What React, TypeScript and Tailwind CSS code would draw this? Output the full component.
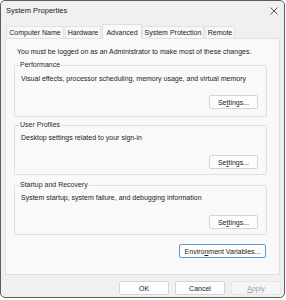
import React from "react";

const font = { fontFamily: '"Liberation Sans", Arial, sans-serif' };

function Btn({
  children,
  w,
  disabled,
  primary,
}: {
  children: React.ReactNode;
  w: string;
  disabled?: boolean;
  primary?: boolean;
}) {
  return (
    <div
      className={`${w} h-[14px] flex items-center justify-center rounded-[2px] border text-[7px] leading-none ${
        disabled
          ? "bg-[#f5f5f5] border-[#e6e6e6] text-[#a2a2a2]"
          : primary
          ? "bg-[#fdfdfd] border-[#5b9bd9] text-[#1b1b1b]"
          : "bg-[#fdfdfd] border-[#d4d4d4] text-[#1b1b1b]"
      }`}
    >
      {children}
    </div>
  );
}

function Group({
  label,
  text,
  h,
  pt,
  gap,
}: {
  label: string;
  text: string;
  h: string;
  pt: string;
  gap: string;
}) {
  return (
    <div className={`relative ${h} ${pt} border border-[#dedede] rounded-[2px] flex flex-col`}>
      <span className="absolute -top-[6px] left-[4px] px-[1px] bg-[#f9f9f9] text-[7px] leading-[10px] text-[#2a2a2a]">
        {label}
      </span>
      <div className="pl-[6px] h-[10px] text-[7px] leading-[10px] text-[#1b1b1b]">{text}</div>
      <div className={`flex justify-end pr-[8px] ${gap}`}>
        <Btn w="w-[49px]">
          Se<span className="underline">t</span>tings...
        </Btn>
      </div>
    </div>
  );
}

function Tab({ label, active, w }: { label: string; active?: boolean; w: string }) {
  return (
    <div
      className={`${w} flex items-center justify-center border border-b-0 text-[7px] leading-none text-[#1b1b1b] ${
        active
          ? "h-[15px] bg-[#f9f9f9] border-[#dedede] -mb-[1px] relative z-10"
          : "h-[12px] bg-[#f7f7f7] border-[#e2e2e2]"
      }`}
    >
      {label}
    </div>
  );
}

export default function App() {
  return (
    <div className="w-[286px] h-[300px] bg-white" style={font}>
      <div className="w-[285px] h-[298px] border border-[#5c5c5c] rounded-[5px] bg-[#f0f0f0] flex flex-col overflow-hidden">
        <div className="h-[20px] flex items-center justify-between pl-[5px] pr-[6px]">
          <span className="text-[7.5px] text-[#1b1b1b]">System Properties</span>
          <svg width="8" height="8" viewBox="0 0 8 8" className="text-[#333]">
            <path d="M0.5 0.5 L7.5 7.5 M7.5 0.5 L0.5 7.5" stroke="currentColor" strokeWidth="0.8" />
          </svg>
        </div>
        <div className="mt-[3px] pl-[5px] flex items-end h-[14px]">
          <Tab label="Computer Name" w="w-[58px]" />
          <Tab label="Hardware" w="w-[36px] ml-[1px]" />
          <Tab label="Advanced" w="w-[40px] ml-[1px]" active />
          <Tab label="System Protection" w="w-[62px]" />
          <Tab label="Remote" w="w-[30px] ml-[1px]" />
        </div>
        <div className="mx-[4px] h-[237px] border border-[#e0e0e0] bg-[#f9f9f9] flex flex-col px-[8px]">
          <div className="mt-[8px] pl-[3px] h-[10px] text-[7px] leading-[10px] text-[#1b1b1b]">
            You must be logged on as an Administrator to make most of these changes.
          </div>
          <div className="mt-[8px] mr-[4px] flex flex-col">
            <Group
              label="Performance"
              text="Visual effects, processor scheduling, memory usage, and virtual memory"
              h="h-[52px]"
              pt="pt-[8px]"
              gap="mt-[11px]"
            />
            <div className="mt-[8px]">
              <Group
                label="User Profiles"
                text="Desktop settings related to your sign-in"
                h="h-[50px]"
                pt="pt-[7px]"
                gap="mt-[12px]"
              />
            </div>
            <div className="mt-[10px]">
              <Group
                label="Startup and Recovery"
                text="System startup, system failure, and debugging information"
                h="h-[50px]"
                pt="pt-[7px]"
                gap="mt-[12px]"
              />
            </div>
            <div className="mt-[9px] flex justify-end pr-[1px]">
              <Btn w="w-[87px]" primary>
                Enviro<span className="underline">n</span>ment Variables...
              </Btn>
            </div>
          </div>
        </div>
        <div className="mt-[6px] flex justify-end gap-[6px] pr-[3px]">
          <Btn w="w-[50px]">OK</Btn>
          <Btn w="w-[50px]">Cancel</Btn>
          <Btn w="w-[50px]" disabled>
            <span className="underline">A</span>pply
          </Btn>
        </div>
      </div>
    </div>
  );
}
